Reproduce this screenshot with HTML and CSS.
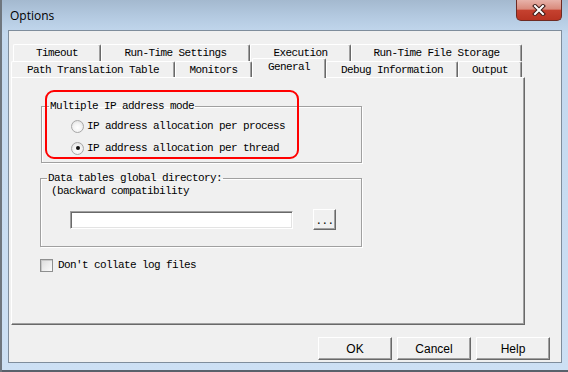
FILE: index.html
```html
<!DOCTYPE html>
<html lang="en">
<head>
  <meta charset="UTF-8">
  <title>Options</title>
  <link rel="stylesheet" href="styles.css">
</head>
<body>
  <div class="titlebar">
    <span class="title">Options</span>
    <div class="close">
      <svg width="14" height="12" viewBox="0 0 14 12">
        <path d="M3 2 L11 10 M11 2 L3 10" stroke="#3b1a16" stroke-width="4" stroke-linecap="square"/>
        <path d="M3 2 L11 10 M11 2 L3 10" stroke="#ffffff" stroke-width="2" stroke-linecap="square"/>
      </svg>
    </div>
  </div>

  <div class="client">
    <div class="tabctl">
      <div class="tabrow back">
        <div class="tab" style="width: 88px">Timeout</div>
        <div class="tab" style="width: 149px">Run-Time Settings</div>
        <div class="tab" style="width: 101px">Execution</div>
        <div class="tab" style="width: 171px">Run-Time File Storage</div>
      </div>
      <div class="tabrow front">
        <div class="tab" style="width: 164px">Path Translation Table</div>
        <div class="tab" style="width: 77px">Monitors</div>
        <div class="tab active" style="width: 74px">General</div>
        <div class="tab" style="width: 132px">Debug Information</div>
        <div class="tab" style="width: 64px">Output</div>
      </div>

      <div class="panel">
        <fieldset class="group ipmode">
          <legend>Multiple IP address mode</legend>
          <div class="groupbody">
            <label class="option"><span class="radio"></span>IP address allocation per process</label>
            <label class="option"><span class="radio checked"></span>IP address allocation per thread</label>
          </div>
        </fieldset>

        <fieldset class="group datadir">
          <legend>Data tables global directory:</legend>
          <div class="groupbody">
            <div class="hint">(backward compatibility</div>
            <div class="pathrow">
              <div class="textbox"></div>
              <div class="btn browse">...</div>
            </div>
          </div>
        </fieldset>

        <label class="check"><span class="checkbox"></span>Don't collate log files</label>

        <div class="marker"></div>
      </div>
    </div>

    <div class="buttons">
      <div class="btn push">OK</div>
      <div class="btn push">Cancel</div>
      <div class="btn push">Help</div>
    </div>
  </div>
</body>
</html>
```

FILE: styles.css
```css
:root {
  --face: #f0f0f0;
  --shadow: #a0a0a0;
  --dark: #696969;
  --mono: "Liberation Mono", "DejaVu Sans Mono", monospace;
}

body {
  margin: 0;
  width: 568px;
  height: 372px;
  overflow: hidden;
  background: linear-gradient(180deg, #a4b9cf 0, #b3c9e0 16px, #c3d8ee 34px, #cde0f4 100%);
  box-shadow: inset 2px 0 #6f767e, inset 0 -2px #59616b;
  font-family: var(--mono);
  font-size: 11px;
  letter-spacing: -0.6px;
  color: #000;
}

.titlebar {
  height: 30px;
  display: flex;
  justify-content: space-between;
  align-items: flex-start;
}

.title {
  font-family: "Open Sans", "DejaVu Sans", sans-serif;
  font-size: 12px;
  letter-spacing: 0;
  line-height: 14px;
  padding: 9px 0 0 10px;
  color: #000;
}

.close {
  width: 46px;
  height: 21px;
  box-sizing: border-box;
  margin-right: 6px;
  border: 1px solid #6e2a22;
  border-top: none;
  border-radius: 0 0 5px 5px;
  background: linear-gradient(180deg, #e7b2a9 0, #d98a7c 45%, #c5412f 52%, #b83322 100%);
  display: flex;
  align-items: center;
  justify-content: center;
}

.client {
  box-sizing: border-box;
  width: 554px;
  height: 333px;
  margin-left: 8px;
  border: 1px solid #7f8d9c;
  background: var(--face);
}

.tabctl {
  width: 514px;
  margin: 13px 0 0 2px;
}

.tabrow {
  display: flex;
  align-items: flex-start;
  height: 17px;
}

.tabrow.back {
  padding-left: 2px;
}

.tabrow.front {
  height: 16px;
}

.tab {
  box-sizing: border-box;
  height: 17px;
  border-top: 1px solid #fff;
  border-left: 1px solid #fff;
  border-right: 1px solid var(--dark);
  box-shadow: inset -1px 0 var(--shadow);
  border-radius: 2px 2px 0 0;
  background: var(--face);
  text-align: center;
  line-height: 16px;
  white-space: nowrap;
}

.tab.active {
  height: 20px;
  margin-top: -3px;
  line-height: 17px;
  position: relative;
  z-index: 1;
}

.panel {
  position: relative;
  box-sizing: border-box;
  width: 514px;
  height: 248px;
  padding: 22px 0 0 29px;
  border-top: 1px solid #fff;
  border-left: 1px solid #fff;
  border-right: 1px solid var(--dark);
  border-bottom: 1px solid var(--dark);
  box-shadow: inset -1px -1px var(--shadow);
}

.group {
  box-sizing: border-box;
  width: 321px;
  margin: 0;
  padding: 0;
  min-width: 0;
  border: 1px solid var(--shadow);
  box-shadow: inset 1px 1px #fff, 1px 1px #fff;
}

.group legend {
  padding: 0 1px;
  margin-left: 7px;
  line-height: 12px;
}

.ipmode .groupbody {
  padding: 3px 0 3px 29px;
}

.option {
  display: flex;
  align-items: center;
  height: 22px;
}

.radio {
  width: 13px;
  height: 13px;
  box-sizing: border-box;
  border: 1px solid #a7a7a7;
  border-radius: 50%;
  background: radial-gradient(circle at 50% 60%, #ffffff 0, #f4f4f4 45%, #d9d9d9 100%);
  margin-right: 3px;
  display: flex;
  align-items: center;
  justify-content: center;
}

.radio.checked::after {
  content: "";
  width: 4px;
  height: 4px;
  border-radius: 50%;
  background: #111;
}

.datadir {
  width: 322px;
  margin-left: -1px;
  margin-top: 9px;
}

.datadir legend {
  margin-left: 6px;
}

.datadir .groupbody {
  padding: 1px 0 16px 10px;
}

.hint {
  line-height: 12px;
}

.pathrow {
  display: flex;
  align-items: center;
  height: 21px;
  margin: 12px 0 0 19px;
}

.textbox {
  box-sizing: border-box;
  width: 223px;
  height: 18px;
  background: #fff;
  border-top: 1px solid var(--shadow);
  border-left: 1px solid var(--shadow);
  border-right: 1px solid #fff;
  border-bottom: 1px solid #fff;
  box-shadow: inset 1px 1px var(--dark), inset -1px -1px #e3e3e3;
}

.btn {
  box-sizing: border-box;
  background: var(--face);
  border-top: 1px solid #fff;
  border-left: 1px solid #fff;
  border-right: 1px solid var(--dark);
  border-bottom: 1px solid var(--dark);
  box-shadow: inset -1px -1px var(--shadow);
  display: flex;
  align-items: center;
  justify-content: center;
}

.browse {
  width: 23px;
  height: 21px;
  margin-left: 20px;
  padding-top: 2px;
}

.check {
  display: flex;
  align-items: center;
  height: 14px;
  margin: 11px 0 0 -1px;
}

.checkbox {
  width: 13px;
  height: 13px;
  box-sizing: border-box;
  border: 1px solid #8e8f8f;
  background: linear-gradient(135deg, #dcdcdc, #fbfbfb);
  box-shadow: inset 1px 1px #c8c8c8;
  margin-right: 5px;
}

.marker {
  position: absolute;
  left: 33px;
  top: 12px;
  width: 254px;
  height: 69px;
  box-sizing: border-box;
  border: 2px solid #ff0000;
  border-radius: 9px;
}

.buttons {
  display: flex;
  justify-content: flex-end;
  gap: 5px;
  margin-top: 12px;
  padding-right: 11px;
}

.push {
  width: 74px;
  height: 23px;
  font-family: "Liberation Sans", Arial, sans-serif;
  font-size: 12px;
  letter-spacing: 0;
}
```
